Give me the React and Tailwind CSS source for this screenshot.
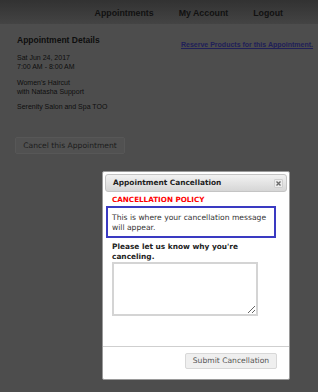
import React from 'react'

const sans = { fontFamily: '"Liberation Sans", Arial, sans-serif' }

function CloseButton() {
  return (
    <button className="flex h-[9px] w-[9px] items-center justify-center rounded-[1px] border border-[#cfcfcf] bg-[#ececec]">
      <svg width="5" height="5" viewBox="0 0 5 5">
        <path d="M0.5 0.5L4.5 4.5M4.5 0.5L0.5 4.5" stroke="#6b6b6b" strokeWidth="1.4" />
      </svg>
    </button>
  )
}

function CancelDialog() {
  return (
    <div className="absolute left-[102px] top-[171px] flex h-[209px] w-[188px] flex-col rounded-[2px] border border-[#9a9a9a] bg-white p-[2px] font-['DejaVu_Sans',Verdana,sans-serif]">
      <div className="flex h-[18px] items-center justify-between rounded-[3px] border border-[#c4c4c4] bg-gradient-to-b from-[#f2f2f2] to-[#d6d6d6] pl-[7px] pr-[3px]">
        <span className="text-[7.4px] font-bold leading-[10px] text-[#222]">Appointment Cancellation</span>
        <CloseButton />
      </div>

      <div className="pl-[7px]">
        <p className="mt-[3px] text-[7.2px] font-bold leading-[10px] text-[#ff0000]">CANCELLATION POLICY</p>
        <div className="mt-[1px] ml-[-6px] w-[170px] border-2 border-[#3a3ac2] pl-[4px] pt-[5px] pb-[3px] text-[7.6px] leading-[10px] text-[#333]">
          This is where your cancellation message will appear.
        </div>
        <p className="mt-[4px] w-[168px] text-[7.4px] font-bold leading-[10px] text-[#222]">
          Please let us know why you're canceling.
        </p>
        <textarea className="block h-[54px] w-[146px] border-2 border-[#d4d4d4] bg-white" />
      </div>

      <div className="mx-[-2px] mt-[30px] h-px bg-[#cfcfcf]" />

      <button className="mr-[10px] mt-[6px] h-[16px] w-[92px] self-end rounded-[2px] border border-[#d8d8d8] bg-[#efefef] text-[7.6px] leading-[10px] text-[#555]">
        Submit Cancellation
      </button>
    </div>
  )
}

export default function App() {
  return (
    <div className="relative h-[392px] w-[318px] overflow-hidden bg-[#4d4d4d]" style={sans}>
      <nav className="flex h-[24px] items-center justify-end gap-[25px] bg-gradient-to-b from-[#323232] to-[#444] pr-[35px] pt-[4px] text-[8.8px] font-bold text-[#111]">
        <span>Appointments</span>
        <span>My Account</span>
        <span>Logout</span>
      </nav>

      <div className="pl-[17px] pr-[5px] pt-[11px] text-[7px] leading-[9px] text-[#0e0e0e]">
        <div className="flex items-start justify-between">
          <h2 className="text-[8.5px] font-bold leading-[10px]">Appointment Details</h2>
          <a href="#" className="mt-[5px] text-[7px] font-bold leading-[10px] text-[#202058] underline">
            Reserve Products for this Appointment.
          </a>
        </div>

        <div className="mt-[3px]">
          <div>Sat Jun 24, 2017</div>
          <div>7:00 AM - 8:00 AM</div>
        </div>

        <div className="mt-[7px]">
          <div>Women's Haircut</div>
          <div>with Natasha Support</div>
        </div>

        <div className="mt-[6px]">Serenity Salon and Spa TOO</div>

        <button className="ml-[-2px] mt-[26px] h-[17px] w-[110px] rounded-[2px] border border-[#575757] bg-[#515151] font-['DejaVu_Sans',Verdana,sans-serif] text-[7.6px] text-[#1c1c1c]">
          Cancel this Appointment
        </button>
      </div>

      <CancelDialog />
    </div>
  )
}
